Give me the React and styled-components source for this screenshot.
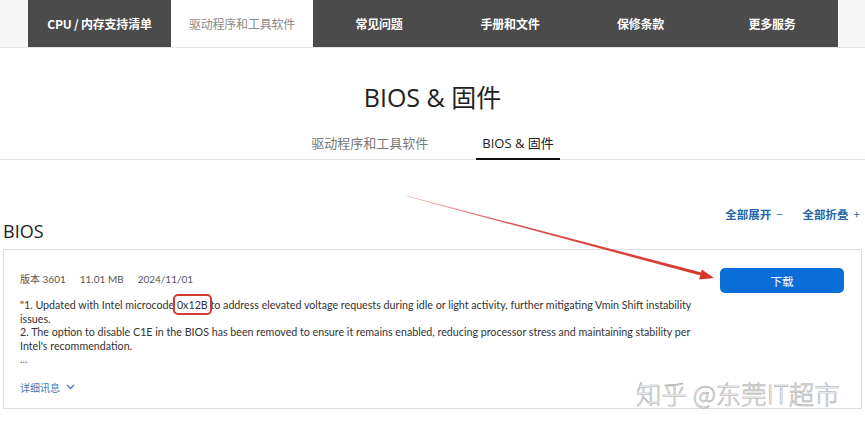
import React from "react";
import styled, { createGlobalStyle } from "styled-components";

const GlobalStyle = createGlobalStyle`
  body {
    margin: 0;
    background: #ffffff;
    font-family: "Noto Sans", "Noto Sans CJK SC", sans-serif;
  }
  * {
    box-sizing: border-box;
  }
`;

const Page = styled.div`
  position: relative;
  width: 865px;
  height: 427px;
  overflow: hidden;
  background: #fff;
`;

const TopBar = styled.header`
  display: flex;
  height: 48px;
  padding-left: 28px;
  background: #f7f7f7;
  border-bottom: 1px solid #e4e4e4;
`;

const NavTab = styled.div`
  width: ${(p) => p.$w}px;
  display: flex;
  align-items: center;
  justify-content: center;
  background: ${(p) => (p.$active ? "#ffffff" : "#4b4b4b")};
  color: ${(p) => (p.$active ? "#8a8a8a" : "#ffffff")};
  font-family: "Noto Sans CJK SC", sans-serif;
  font-size: 12px;
  font-weight: ${(p) => (p.$active ? 400 : 700)};
  letter-spacing: -0.2px;
`;

const Title = styled.h1`
  margin: 32px 0 0;
  text-align: center;
  font-family: "Open Sans", "Noto Sans CJK SC", sans-serif;
  font-weight: 400;
  font-size: 25px;
  line-height: 34px;
  color: #222;
`;

const SubTabs = styled.nav`
  display: flex;
  justify-content: center;
  gap: 42px;
  margin-top: 20px;
  border-bottom: 1px solid #e2e2e2;
`;

const SubTab = styled.div`
  padding: 0 6px 6px;
  font-family: "Open Sans", "Noto Sans CJK SC", sans-serif;
  font-size: 13px;
  line-height: 18px;
  color: ${(p) => (p.$active ? "#222" : "#777")};
  border-bottom: 2px solid ${(p) => (p.$active ? "#111" : "transparent")};
  margin-bottom: -1px;
`;

const Actions = styled.div`
  display: flex;
  justify-content: flex-end;
  gap: 20px;
  margin-top: 46px;
  padding-right: 5px;
`;

const ActionLink = styled.span`
  font-family: "Noto Sans CJK SC", sans-serif;
  font-size: 11.5px;
  font-weight: 700;
  color: #2566a8;
  line-height: 16px;

  em {
    font-style: normal;
    font-weight: 400;
    margin-left: 5px;
  }
`;

const SectionTitle = styled.h2`
  margin: -3px 0 0 3px;
  font-family: "Open Sans", sans-serif;
  font-weight: 400;
  font-size: 18px;
  line-height: 24px;
  color: #222;
`;

const Card = styled.section`
  display: flex;
  align-items: flex-start;
  margin: 6px 3px 0 3px;
  height: 160px;
  padding: 18px 17px 0 16px;
  border: 1px solid #dedede;
`;

const CardBody = styled.div`
  flex: 1;
  font-family: "Lato", "Noto Sans CJK SC", sans-serif;
  font-size: 10.7px;
  color: #333;
`;

const Meta = styled.div`
  display: flex;
  gap: 14px;
  font-size: 10px;
  line-height: 16px;
  color: #555;
  margin-top: 3px;
`;

const Desc = styled.div`
  margin-top: 11px;
  width: 682px;
  line-height: 13.5px;
`;

const Marked = styled.span`
  outline: 2px solid #cf3a35;
  outline-offset: 2px;
  border-radius: 1px;
`;

const Ellipsis = styled.div`
  color: #666;
`;

const More = styled.div`
  display: flex;
  align-items: center;
  gap: 6px;
  margin-top: 14px;
  font-family: "Noto Sans CJK SC", sans-serif;
  font-size: 10px;
  color: #3c78b8;
`;

const DownloadButton = styled.button`
  width: 124px;
  height: 25px;
  border: none;
  border-radius: 5px;
  background: #0b6ed8;
  color: #fff;
  font-family: "Noto Sans CJK SC", sans-serif;
  font-size: 11.5px;
`;

const Watermark = styled.div`
  position: absolute;
  left: 636px;
  top: 374px;
  font-family: "Noto Sans CJK SC", sans-serif;
  font-size: 25.5px;
  font-weight: 300;
  color: rgba(255, 255, 255, 0.9);
  -webkit-text-stroke: 0.6px #a9a9a9;
`;

const Overlay = styled.svg`
  position: absolute;
  left: 0;
  top: 0;
  pointer-events: none;
`;

const navTabs = [
  { label: "CPU / 内存支持清单", w: 143 },
  { label: "驱动程序和工具软件", w: 142, active: true },
  { label: "常见问题", w: 132 },
  { label: "手册和文件", w: 130 },
  { label: "保修条款", w: 131 },
  { label: "更多服务", w: 132 },
];

const Arrow = () => (
  <Overlay width="865" height="427" viewBox="0 0 865 427">
    <defs>
      <linearGradient id="arrowFade" x1="407" y1="196" x2="714" y2="278" gradientUnits="userSpaceOnUse">
        <stop offset="0" stopColor="#e9b9b6" />
        <stop offset="0.35" stopColor="#d9544c" />
        <stop offset="1" stopColor="#d8342a" />
      </linearGradient>
    </defs>
    <polygon
      points="407,195.8 407,196.4 700.6,275.5 701.4,272.5"
      fill="url(#arrowFade)"
    />
    <polygon points="714,278 699.2,279.6 701.8,269.4" fill="#d8342a" />
  </Overlay>
);

export default function App() {
  return (
    <Page>
      <GlobalStyle />
      <TopBar>
        {navTabs.map((t) => (
          <NavTab key={t.label} $w={t.w} $active={t.active}>
            {t.label}
          </NavTab>
        ))}
      </TopBar>

      <Title>BIOS &amp; 固件</Title>

      <SubTabs>
        <SubTab>驱动程序和工具软件</SubTab>
        <SubTab $active>BIOS &amp; 固件</SubTab>
      </SubTabs>

      <Actions>
        <ActionLink>
          全部展开<em>−</em>
        </ActionLink>
        <ActionLink>
          全部折叠<em>+</em>
        </ActionLink>
      </Actions>

      <SectionTitle>BIOS</SectionTitle>

      <Card>
        <CardBody>
          <Meta>
            <span>版本 3601</span>
            <span>11.01 MB</span>
            <span>2024/11/01</span>
          </Meta>
          <Desc>
            "1. Updated with Intel microcode <Marked>0x12B</Marked> to address
            elevated voltage requests during idle or light activity, further
            mitigating Vmin Shift instability issues.
            <br />
            2. The option to disable C1E in the BIOS has been removed to ensure
            it remains enabled, reducing processor stress and maintaining
            stability per Intel's recommendation.
            <Ellipsis>...</Ellipsis>
          </Desc>
          <More>
            详细讯息
            <svg width="9" height="6" viewBox="0 0 9 6">
              <path d="M1 1l3.5 3.5L8 1" fill="none" stroke="#3c78b8" strokeWidth="1.3" />
            </svg>
          </More>
        </CardBody>
        <DownloadButton>下载</DownloadButton>
      </Card>

      <Watermark>知乎 @东莞IT超市</Watermark>
      <Arrow />
    </Page>
  );
}
